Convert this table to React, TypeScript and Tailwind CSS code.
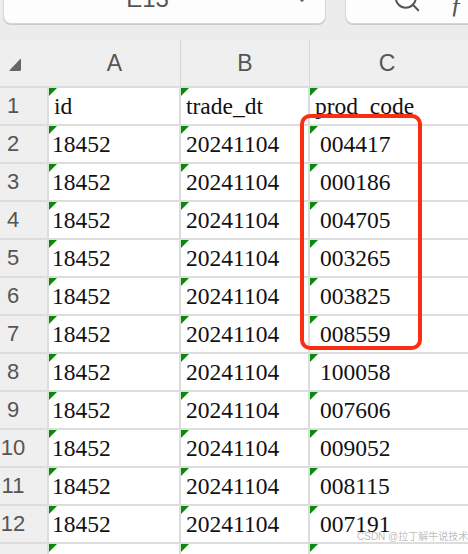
import { ChevronDown, Search } from "lucide-react";

const rows: [string, string, string, string][] = [
  ["2", "18452", "20241104", "004417"],
  ["3", "18452", "20241104", "000186"],
  ["4", "18452", "20241104", "004705"],
  ["5", "18452", "20241104", "003265"],
  ["6", "18452", "20241104", "003825"],
  ["7", "18452", "20241104", "008559"],
  ["8", "18452", "20241104", "100058"],
  ["9", "18452", "20241104", "007606"],
  ["10", "18452", "20241104", "009052"],
  ["11", "18452", "20241104", "008115"],
  ["12", "18452", "20241104", "007191"],
  ["13", "18452", "20241104", "007213"],
];

const Flag = () => (
  <span className="absolute left-0 top-0 w-0 h-0 border-t-[8px] border-r-[8px] border-t-[#0a8a0a] border-r-transparent" />
);

const Cell = ({ text, pad = "pl-[4px]" }: { text: string; pad?: string }) => (
  <div className={`relative bg-white h-[36px] flex items-center ${pad} text-[23.5px] text-[#111] font-['Liberation_Serif',serif] leading-none`}>
    <Flag />
    <span className="pt-[1px]">{text}</span>
  </div>
);

const RowNum = ({ n }: { n: string }) => (
  <div className="bg-[#efefef] h-[36px] flex items-center">
    <span className="w-[26px] text-center text-[22px] text-[#555] leading-none">{n}</span>
  </div>
);

export default function App() {
  return (
    <div className="relative w-[468px] h-[554px] overflow-hidden bg-[#ececec] font-['Liberation_Sans',sans-serif]">
      {/* toolbar: name box + formula bar, cut off at the top */}
      <div className="flex h-[40px] gap-[19px] pl-[3px]">
        <div className="relative w-[323px] h-[50px] -mt-[26px] rounded-[8px] bg-[#fdfdfd] border border-[#d6d6d6] shadow-[0_1px_0_#cbcbcb] flex items-center justify-center">
          <span className="text-[24px] text-[#555] -ml-[34px]">E13</span>
          <ChevronDown className="absolute right-[18px] top-[20px] h-[10px] w-[10px] text-[#666]" strokeWidth={3} />
        </div>
        <div className="relative flex-1 h-[50px] -mt-[26px] rounded-l-[8px] bg-[#fdfdfd] border border-r-0 border-[#d6d6d6] shadow-[0_1px_0_#cbcbcb]">
          <Search className="absolute left-[46px] top-[9px] h-[30px] w-[30px] text-[#555]" strokeWidth={1.6} />
          <span className="absolute left-[104px] top-[10px] text-[26px] italic text-[#555] font-['Liberation_Serif',serif]">ƒ</span>
        </div>
      </div>

      {/* column headers */}
      <div className="grid grid-cols-[49px_131px_129px_1fr] h-[46px] bg-[#efefef] text-[23px] text-[#555]">
        <div className="flex items-center pl-[8px] pt-[2px]">
          <svg width="15" height="15" viewBox="0 0 15 15">
            <path d="M13 2 L13 12.5 Q13 14 11.5 14 L2 14 Q0.8 14 1.8 13 L12 2.3 Q13 1.3 13 2 Z" fill="#666" />
          </svg>
        </div>
        <div className="flex items-center justify-center">A</div>
        <div className="flex items-center justify-center border-l border-[#d6d6d6]">B</div>
        <div className="flex items-center justify-center border-l border-[#d6d6d6] pr-[4px]">C</div>
      </div>

      {/* sheet body */}
      <div className="grid grid-cols-[47px_130px_127px_1fr] gap-[2px] pt-[2px] bg-[#dddddd]">
        <RowNum n="1" />
        <Cell text="id" pad="pl-[5px]" />
        <Cell text="trade_dt" pad="pl-[5px]" />
        <Cell text="prod_code" pad="pl-[5px]" />
        {rows.map(([n, a, b, c]) => (
          <div key={n} className="contents">
            <RowNum n={n} />
            <Cell text={a} pad="pl-[3px]" />
            <Cell text={b} pad="pl-[5px]" />
            <Cell text={c} pad="pl-[10px]" />
          </div>
        ))}
      </div>

      {/* red highlight annotation */}
      <div className="absolute left-[300px] top-[114px] w-[122px] h-[236px] border-[4.5px] border-[#fc2e12] rounded-[10px]" />

      {/* watermark */}
      <div className="absolute left-[357px] top-[532px] text-[10px] leading-none text-[#a0a0a0]/70 font-['Liberation_Sans','Noto_Sans_CJK_SC',sans-serif] whitespace-nowrap">
        CSDN @拉丁解牛说技术
      </div>
    </div>
  );
}
